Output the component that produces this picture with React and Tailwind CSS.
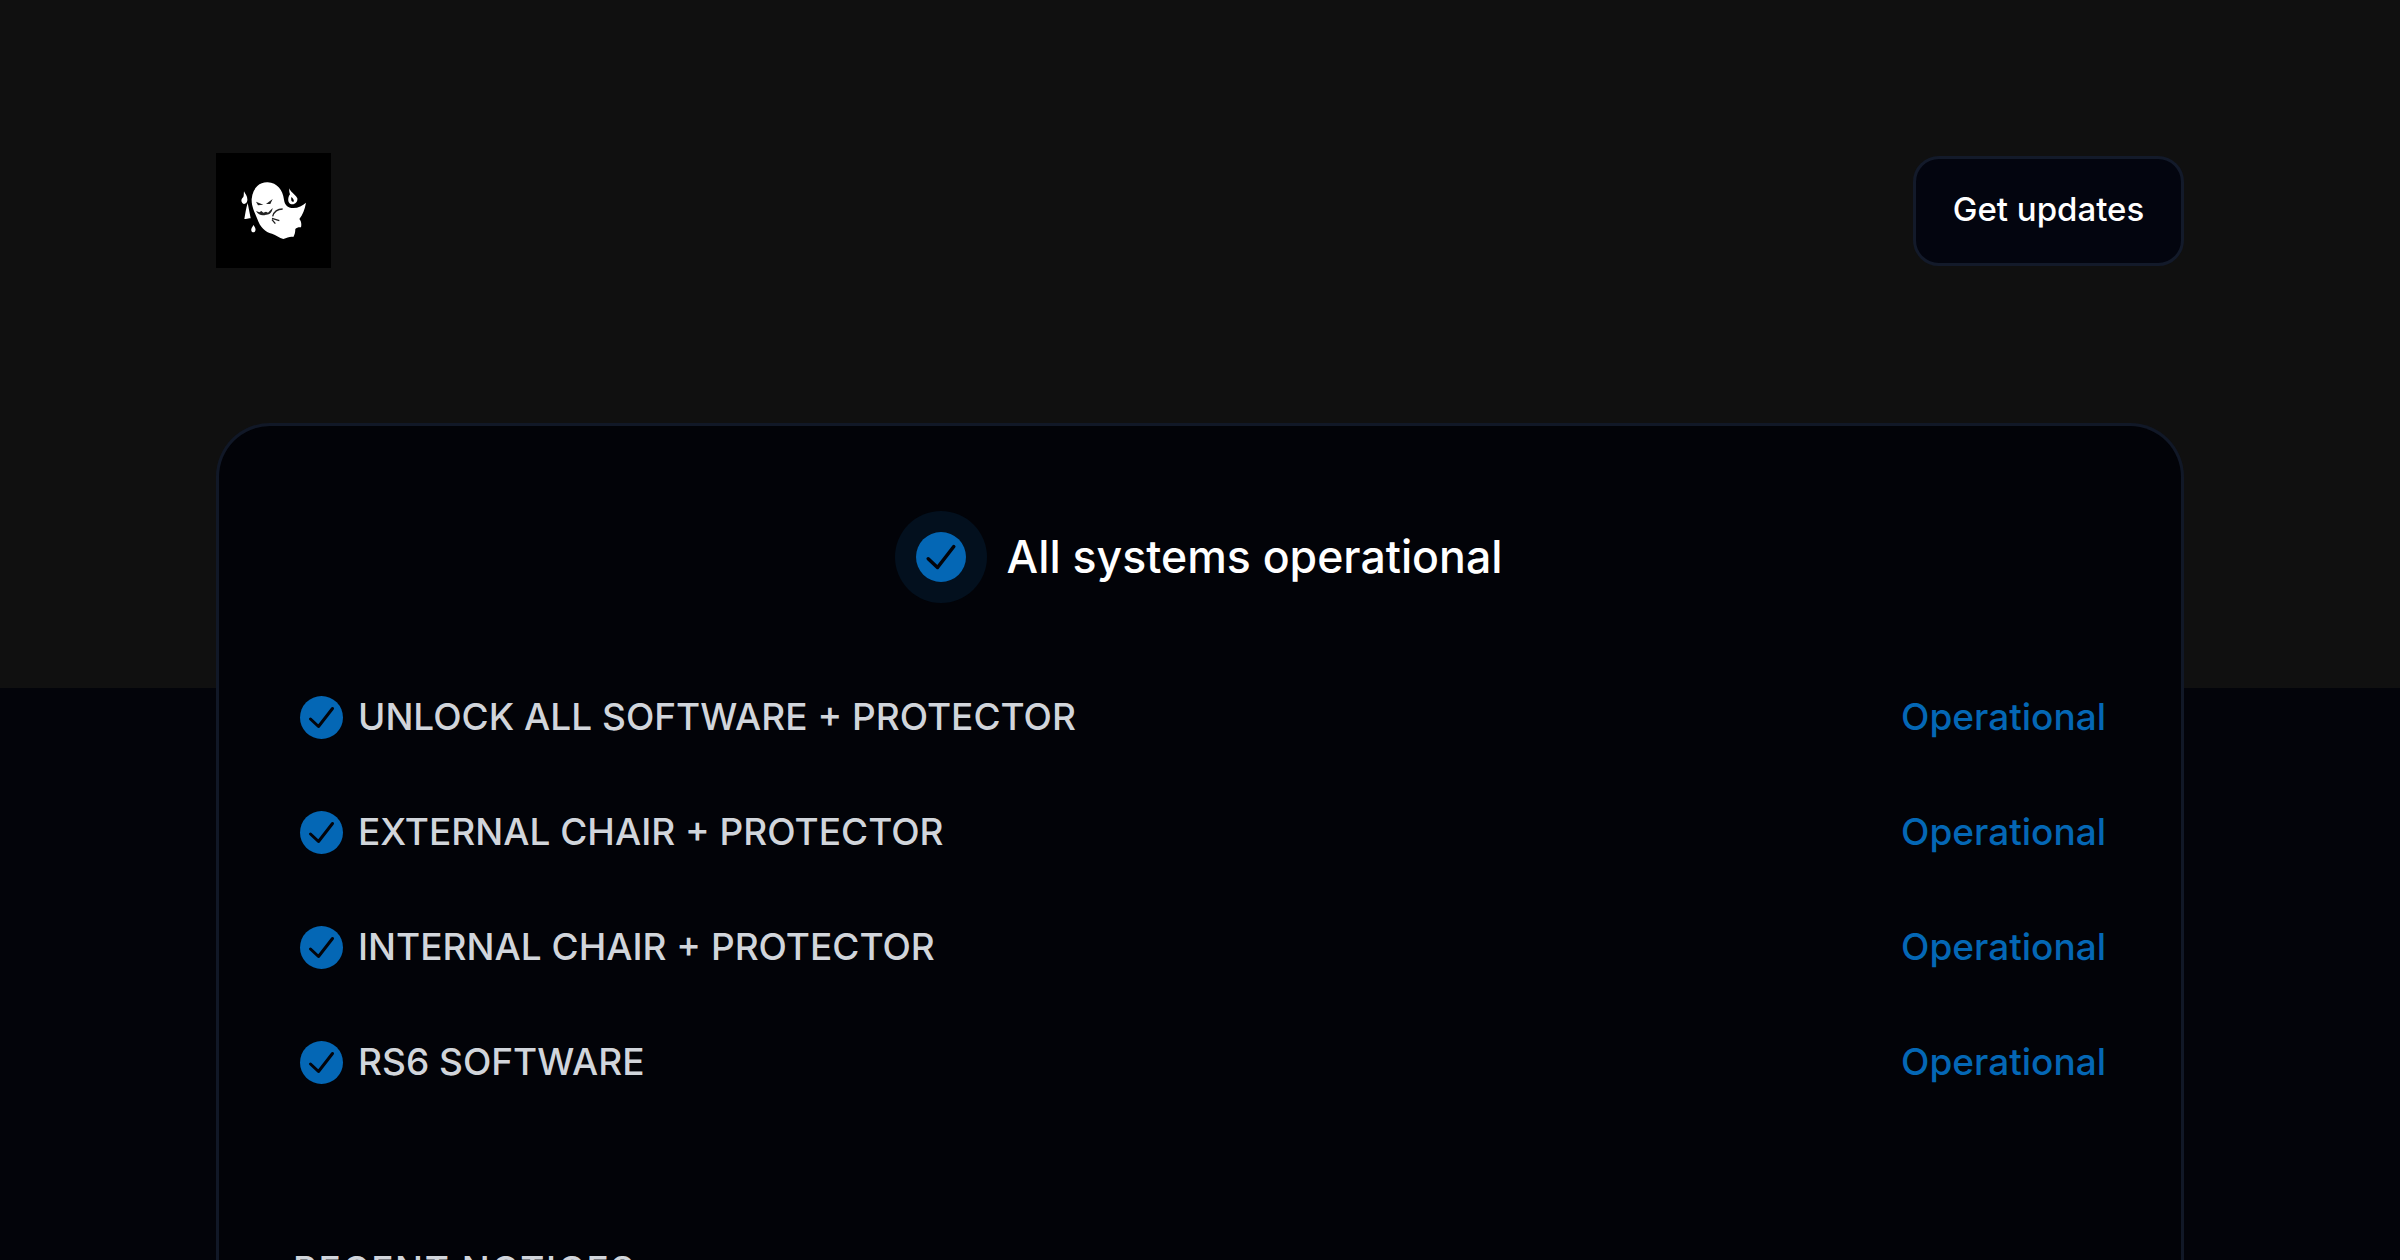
import React from 'react';

const services = [
  'UNLOCK ALL SOFTWARE + PROTECTOR',
  'EXTERNAL CHAIR + PROTECTOR',
  'INTERNAL CHAIR + PROTECTOR',
  'RS6 SOFTWARE',
];

function CheckCircle({ className }) {
  return (
    <span className={`block rounded-full bg-[#0467b5] flex-shrink-0 ${className}`}>
      <svg className="w-full h-full text-[#03040a]" fill="none" viewBox="0 0 43 43" stroke="currentColor">
        <path strokeLinecap="round" strokeLinejoin="round" strokeWidth={3} d="M10.5 23l8 7.5L32.5 12.5" />
      </svg>
    </span>
  );
}

function GhostLogo() {
  return (
    <div className="w-[115px] h-[115px] bg-black flex-shrink-0">
      {/* coordinates taken from the 3x crop of the logo */}
      <svg className="w-full h-full blur-[0.4px]" viewBox="48 40 345 345">
        <path fill="#fff" d="M155 178C158 145 178 127 203 128C232 130 248 150 252 180C254 195 262 205 280 205C295 205 308 198 318 189C314 210 308 226 298 238C304 244 305 255 303 263C296 262 290 264 286 268C286 277 284 286 280 292C270 290 262 294 250 298C238 294 228 286 216 282C196 278 180 262 172 238C164 218 154 200 155 178Z" />
        <path fill="#fff" d="M143 190L152 236C146 234 140 238 133 238C136 222 138 206 143 190Z" />
        <path fill="#fff" d="M132 155C136 164 143 170 142 182C141 192 132 196 127 190C121 182 126 176 130 172C132 168 131 160 132 155Z" />
        <path fill="#fff" d="M268 146C270 156 284 162 292 176C294 190 280 198 270 192C262 186 264 172 270 164C268 158 267 152 268 146Z" />
        <path fill="#000" d="M274 172C279 176 283 182 281 186C276 188 272 184 274 172Z" />
        <path fill="#fff" d="M160 256C165 262 168 268 166 273C164 279 156 279 154 273C152 267 158 262 160 256Z" />
        <path fill="#222" d="M168 186L190 195L174 197ZM218 178L198 193L211 193Z" />
        <path fill="#222" d="M168 214L178 218L184 214L190 219L198 216L204 219L218 205C216 219 208 226 198 225C186 229 176 226 168 214Z" />
        <path fill="none" stroke="#222" strokeWidth={4} d="M248 208C234 208 222 216 218 230M216 236L238 243M216 240L226 252" />
      </svg>
    </div>
  );
}

export default function App() {
  return (
    <div className="h-[1260px] overflow-hidden bg-[#03040a] bg-[linear-gradient(#101010_688px,#03040a_688px)] font-['Inter',sans-serif]">
      <div className="mx-[216px] pt-[153px]">
        <div className="flex items-center justify-between">
          <GhostLogo />
          <button className="w-[271px] h-[110px] pb-[2px] rounded-[26px] border-[3px] border-[#131a2a] bg-[#03050f] text-[33px] font-[450] text-white">
            Get updates
          </button>
        </div>

        <div className="mt-[155px] rounded-t-[54px] border-[3px] border-b-0 border-[#111827] bg-[#020308] pl-[81px] pr-[75px] pt-[85px]">
          <div className="flex items-center justify-center gap-[20px] h-[92px] pr-[9px]">
            <span className="w-[92px] h-[92px] rounded-full bg-[#03101e] flex items-center justify-center">
              <CheckCircle className="w-[50px] h-[50px]" />
            </span>
            <h1 className="text-[44.6px] font-[450] text-white">All systems operational</h1>
          </div>

          <div className="mt-[57px]">
            {services.map((name) => (
              <div key={name} className="flex items-center justify-between h-[115px]">
                <div className="flex items-center gap-[15px]">
                  <CheckCircle className="w-[43px] h-[43px]" />
                  <span className="pb-[2px] text-[37px] font-[450] text-[#d1d5db]">{name}</span>
                </div>
                <span className="pb-[2px] text-[37px] font-[450] text-[#0467b5]">Operational</span>
              </div>
            ))}
          </div>

          <h2 className="mt-[122px] -ml-[7px] text-[37px] font-[450] text-[#d1d5db] tracking-[0.043em]">RECENT NOTICES</h2>
        </div>
      </div>
    </div>
  );
}
